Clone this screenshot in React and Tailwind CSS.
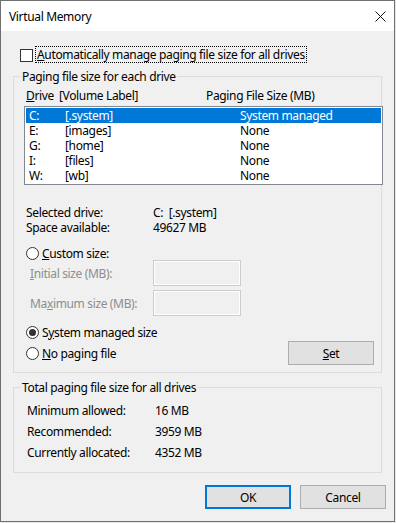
import React from "react";

const drives = [
  { d: "C:", label: "[.system]", size: "System managed" },
  { d: "E:", label: "[images]", size: "None" },
  { d: "G:", label: "[home]", size: "None" },
  { d: "I:", label: "[files]", size: "None" },
  { d: "W:", label: "[wb]", size: "None" },
];

function Radio({ checked }) {
  return (
    <span className="w-[13px] h-[13px] rounded-full border border-[#333333] bg-white flex items-center justify-center shrink-0">
      {checked && <span className="w-[7px] h-[7px] rounded-full bg-[#333333]" />}
    </span>
  );
}

function Btn({ children, primary }) {
  return (
    <div
      className={
        primary
          ? "w-[86px] h-[24px] border-2 border-[#0078d7] bg-[#e1e1e1] flex items-center justify-center"
          : "w-[86px] h-[24px] border border-[#adadad] bg-[#e1e1e1] flex items-center justify-center"
      }
    >
      {children}
    </div>
  );
}

export default function App() {
  return (
    <div className="w-[396px] h-[523px] bg-[#e8e8e8] text-[12px] tracking-[-0.35px] text-black font-['Noto_Sans',sans-serif] leading-[15px]">
      <div className="w-[395px] h-[522px] border border-[#707070] bg-[#f0f0f0] flex flex-col">
        {/* title bar */}
        <div className="h-[30px] bg-white flex items-center justify-between pl-[8px] pr-[8px] shrink-0">
          <span>Virtual Memory</span>
          <svg width="11" height="11" viewBox="0 0 11 11" className="mt-[1px]">
            <path d="M0.5 0.5 L10.5 10.5 M10.5 0.5 L0.5 10.5" stroke="#111" strokeWidth="1" />
          </svg>
        </div>

        <div className="flex flex-col pl-[12px]">
          {/* auto checkbox */}
          <div className="flex items-start mt-[15px] ml-[7px] h-[17px]">
            <span className="w-[13px] h-[13px] border border-[#333333] bg-white mt-[3px] shrink-0" />
            <span className="ml-[2px] px-[1px] border border-dotted border-black whitespace-nowrap">
              <u>A</u>utomatically manage paging file size for all drives
            </span>
          </div>

          {/* group 1 */}
          <fieldset className="mt-[6px] w-[369px] min-w-0 border border-[#dcdcdc] pb-[7px]">
            <legend className="ml-[7px] px-[1px] leading-[15px]">Paging file size for each drive</legend>
            <div className="flex mt-[4px] ml-[12px] whitespace-nowrap">
              <span className="w-[33px]"><u>D</u>rive</span>
              <span className="w-[147px]">[Volume Label]</span>
              <span>Paging File Size (MB)</span>
            </div>
            <div className="mt-[3px] ml-[10px] w-[359px] h-[79px] border border-[#828790] bg-white p-[1px] flex flex-col">
              {drives.map((r, i) => (
                <div
                  key={r.d}
                  className={
                    i === 0
                      ? "h-[15px] flex pl-[3px] bg-[#0078d7] text-white whitespace-nowrap"
                      : "h-[15px] flex pl-[3px] whitespace-nowrap"
                  }
                >
                  <span className="w-[36px]">{r.d}</span>
                  <span className="w-[175px]">{r.label}</span>
                  <span>{r.size}</span>
                </div>
              ))}
            </div>

            <div className="mt-[20px] ml-[12px] flex">
              <span className="w-[127px]">Selected drive:</span>
              <span>C:&nbsp; [.system]</span>
            </div>
            <div className="ml-[12px] flex">
              <span className="w-[127px]">Space available:</span>
              <span>49627 MB</span>
            </div>

            <div className="mt-[11px] ml-[12px] h-[14px] flex items-center">
              <Radio />
              <span className="ml-[3px]"><u>C</u>ustom size:</span>
            </div>
            <div className="ml-[16px] h-[26px] flex items-center text-[#8d8d8d]">
              <span className="w-[123px]"><u>I</u>nitial size (MB):</span>
              <span className="w-[88px] h-[26px] border border-[#cccccc] shadow-[inset_0_0_0_1px_#ffffff]" />
            </div>
            <div className="mt-[4px] ml-[16px] h-[26px] flex items-center text-[#8d8d8d]">
              <span className="w-[123px]">Ma<u>x</u>imum size (MB):</span>
              <span className="w-[88px] h-[26px] border border-[#cccccc] shadow-[inset_0_0_0_1px_#ffffff]" />
            </div>

            <div className="mt-[9px] ml-[12px] h-[15px] flex items-center">
              <Radio checked />
              <span className="ml-[3px]">S<u>y</u>stem managed size</span>
            </div>
            <div className="mt-[1px] ml-[12px] mr-[7px] h-[24px] flex items-center justify-between">
              <div className="flex items-center">
                <Radio />
                <span className="ml-[3px]"><u>N</u>o paging file</span>
              </div>
              <Btn><span><u>S</u>et</span></Btn>
            </div>
          </fieldset>

          {/* group 2 */}
          <fieldset className="mt-[7px] w-[369px] min-w-0 border border-[#dcdcdc] pb-[9px]">
            <legend className="ml-[7px] px-[1px] leading-[15px]">Total paging file size for all drives</legend>
            <div className="mt-[5px] ml-[13px] flex flex-col">
              <div className="h-[21px] flex items-center">
                <span className="w-[128px]">Minimum allowed:</span>
                <span>16 MB</span>
              </div>
              <div className="h-[21px] flex items-center">
                <span className="w-[128px]">Recommended:</span>
                <span>3959 MB</span>
              </div>
              <div className="h-[21px] flex items-center">
                <span className="w-[128px]">Currently allocated:</span>
                <span>4352 MB</span>
              </div>
            </div>
          </fieldset>

          <div className="mt-[12px] mr-[8px] flex justify-end gap-[9px]">
            <Btn primary>OK</Btn>
            <Btn>Cancel</Btn>
          </div>
        </div>
      </div>
    </div>
  );
}
